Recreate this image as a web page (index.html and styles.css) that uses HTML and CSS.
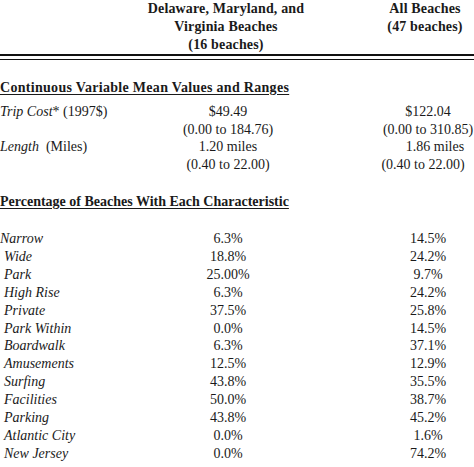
FILE: index.html
```html
<!DOCTYPE html>
<html>
<head>
<meta charset="utf-8">
<link rel="stylesheet" href="styles.css">
</head>
<body>
<div class="page">
  <div class="head">
    <div class="h-mid">Delaware, Maryland, and<br>Virginia Beaches<br>(16 beaches)</div>
    <div class="h-right">All Beaches<br>(47 beaches)</div>
  </div>
  <div class="rule"></div>

  <div class="section sec1">
    <div class="title wide">Continuous Variable Mean Values and Ranges</div>
    <div class="rows rows1">
      <div class="row"><div class="lab"><i>Trip Cost</i>* (1997$)</div><div class="mid">$49.49</div><div class="right">$122.04</div></div>
      <div class="row"><div class="lab"></div><div class="mid">(0.00 to 184.76)</div><div class="right">(0.00 to 310.85)</div></div>
      <div class="row"><div class="lab"><i>Length</i>&nbsp; (Miles)</div><div class="mid">1.20 miles</div><div class="right r-shift">1.86 miles</div></div>
      <div class="row"><div class="lab"></div><div class="mid">(0.40 to 22.00)</div><div class="right r-left">(0.40 to 22.00)</div></div>
    </div>
  </div>

  <div class="section sec2">
    <div class="title">Percentage of Beaches With Each Characteristic</div>
    <div class="rows rows2">
      <div class="row"><div class="lab it first">Narrow</div><div class="mid">6.3%</div><div class="right">14.5%</div></div>
      <div class="row"><div class="lab it">Wide</div><div class="mid">18.8%</div><div class="right">24.2%</div></div>
      <div class="row"><div class="lab it">Park</div><div class="mid">25.00%</div><div class="right">9.7%</div></div>
      <div class="row"><div class="lab it">High Rise</div><div class="mid">6.3%</div><div class="right">24.2%</div></div>
      <div class="row"><div class="lab it">Private</div><div class="mid">37.5%</div><div class="right">25.8%</div></div>
      <div class="row"><div class="lab it">Park Within</div><div class="mid">0.0%</div><div class="right">14.5%</div></div>
      <div class="row"><div class="lab it">Boardwalk</div><div class="mid">6.3%</div><div class="right">37.1%</div></div>
      <div class="row"><div class="lab it">Amusements</div><div class="mid">12.5%</div><div class="right">12.9%</div></div>
      <div class="row"><div class="lab it">Surfing</div><div class="mid">43.8%</div><div class="right">35.5%</div></div>
      <div class="row"><div class="lab it">Facilities</div><div class="mid">50.0%</div><div class="right">38.7%</div></div>
      <div class="row"><div class="lab it">Parking</div><div class="mid">43.8%</div><div class="right">45.2%</div></div>
      <div class="row"><div class="lab it">Atlantic City</div><div class="mid">0.0%</div><div class="right">1.6%</div></div>
      <div class="row"><div class="lab it">New Jersey</div><div class="mid">0.0%</div><div class="right">74.2%</div></div>
    </div>
  </div>
</div>
</body>
</html>
```

FILE: styles.css
```css
html, body {
  margin: 0;
  padding: 0;
  background: #ffffff;
}
body {
  font-family: "Liberation Serif", "Times New Roman", serif;
  font-size: 14px;
  color: #1a1a1a;
  width: 474px;
  height: 467px;
  overflow: hidden;
}
.page {
  display: flex;
  flex-direction: column;
}
.head {
  display: grid;
  grid-template-columns: 126px 200px 1fr;
  font-weight: bold;
  line-height: 18px;
  height: 54px;
  letter-spacing: 0.15px;
}
.h-mid {
  grid-column: 2;
  text-align: center;
}
.h-right {
  grid-column: 3;
  padding-left: 50px;
  text-align: center;
}
.rule {
  border-top: 2px solid #111;
  border-bottom: 1px solid #111;
  height: 3px;
}
.title {
  font-weight: bold;
  line-height: 18px;
  text-decoration: underline;
  text-underline-offset: 2px;
}
.title.wide {
  letter-spacing: 0.3px;
}
.sec1 {
  margin-top: 19px;
}
.rows1 {
  margin-top: 6px;
  line-height: 17.5px;
}
.sec2 {
  margin-top: 20px;
}
.rows2 {
  margin-top: 19px;
  line-height: 17.9px;
}
.row {
  display: grid;
  grid-template-columns: 150px 156px 1fr;
  white-space: nowrap;
}
.lab.it {
  font-style: italic;
  padding-left: 4px;
}
.lab.it.first {
  padding-left: 0;
}
.mid {
  text-align: center;
}
.right {
  padding-left: 76px;
  text-align: center;
}
.r-shift {
  padding-left: 90px;
}
.r-left {
  padding-left: 66px;
}
```
